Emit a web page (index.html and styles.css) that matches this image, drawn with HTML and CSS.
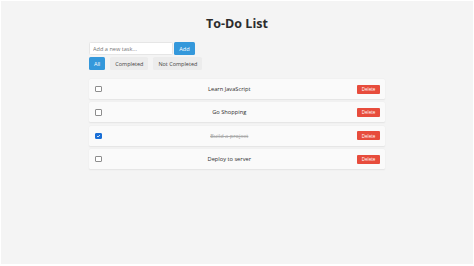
FILE: index.html
```html
<!DOCTYPE html>
<html lang="en">
<head>
  <meta charset="UTF-8" />
  <meta name="viewport" content="width=device-width, initial-scale=1.0"/>
  <title>To-Do List</title>
  <link rel="stylesheet" href="styles.css">
</head>
<body>

  <h1>To-Do List</h1>

  <div class="container">
    <div class="add-row">
      <input type="text" id="task-input" placeholder="Add a new task...">
      <button class="add-btn">Add</button>
    </div>

    <div class="filters">
      <button class="filter active">All</button>
      <button class="filter">Completed</button>
      <button class="filter">Not Completed</button>
    </div>

    <ul class="task-list">
      <li class="task">
        <input type="checkbox">
        <span class="task-text">Learn JavaScript</span>
        <button class="delete-btn">Delete</button>
      </li>
      <li class="task">
        <input type="checkbox">
        <span class="task-text">Go Shopping</span>
        <button class="delete-btn">Delete</button>
      </li>
      <li class="task done">
        <input type="checkbox" checked>
        <span class="task-text">Build a project</span>
        <button class="delete-btn">Delete</button>
      </li>
      <li class="task">
        <input type="checkbox">
        <span class="task-text">Deploy to server</span>
        <button class="delete-btn">Delete</button>
      </li>
    </ul>
  </div>

</body>
</html>
```

FILE: styles.css
```css
html {
  background: #fff;
}

body {
  margin: 1px 1px 2px 1px;
  height: calc(100vh - 3px);
  background: #f4f4f4;
  color: #333;
  font-family: 'Open Sans', 'Noto Sans', sans-serif;
  font-size: 6px;
  overflow: hidden;
}

h1 {
  margin: 0;
  padding-top: 15px;
  font-size: 12.5px;
  line-height: 16px;
  text-align: center;
  color: #2c2c2c;
}

.container {
  width: 296px;
  margin: 0 auto;
}

.add-row {
  display: flex;
  margin-top: 10px;
}

#task-input {
  width: 84px;
  height: 13px;
  box-sizing: border-box;
  padding: 0 3px;
  border: 0.5px solid #e6e6e6;
  border-radius: 1.5px;
  background: #fff;
  font-family: inherit;
  font-size: 5.6px;
  outline: none;
}

#task-input::placeholder {
  color: #777;
}

.add-btn {
  width: 21px;
  height: 13px;
  margin-left: 1px;
  padding: 0;
  border: none;
  border-radius: 1.5px;
  background: #3498db;
  color: #fff;
  font-family: inherit;
  font-size: 5.6px;
}

.filters {
  display: flex;
  gap: 5px;
  margin-top: 2px;
}

.filter {
  height: 13px;
  padding: 0 5px;
  border: none;
  border-radius: 1.5px;
  background: #ececec;
  color: #444;
  font-family: inherit;
  font-size: 5.5px;
}

.filter.active {
  background: #3498db;
  color: #fff;
}

.task-list {
  list-style: none;
  margin: 9px 0 0;
  padding: 0;
  display: flex;
  flex-direction: column;
  gap: 3.4px;
}

.task {
  display: flex;
  align-items: center;
  height: 20px;
  padding: 0 5px 0 6px;
  background: #fafafa;
  border-radius: 1.5px;
  box-shadow: 0 0.5px 1.5px rgba(0, 0, 0, 0.07);
}

.task input[type="checkbox"] {
  appearance: none;
  -webkit-appearance: none;
  box-sizing: border-box;
  width: 6.5px;
  height: 6.5px;
  margin: 0;
  border: 0.8px solid #8d8d8d;
  border-radius: 1px;
  background: #fff;
}

.task input[type="checkbox"]:checked {
  border-color: #1a6fd6;
  background: #1a6fd6 url("data:image/svg+xml,%3Csvg xmlns='http://www.w3.org/2000/svg' viewBox='0 0 10 10'%3E%3Cpath d='M2 5.2l2 2 4-4.4' fill='none' stroke='white' stroke-width='1.8'/%3E%3C/svg%3E") center / 100% 100% no-repeat;
}

.task-text {
  flex: 1;
  text-align: center;
  font-size: 5.7px;
  color: #2f2f2f;
}

.task.done .task-text {
  color: #aaa;
  text-decoration: line-through;
}

.delete-btn {
  width: 23px;
  height: 9px;
  padding: 0;
  border: none;
  border-radius: 1px;
  background: #e74c3c;
  color: #fff;
  font-family: inherit;
  font-size: 4.5px;
}
```
